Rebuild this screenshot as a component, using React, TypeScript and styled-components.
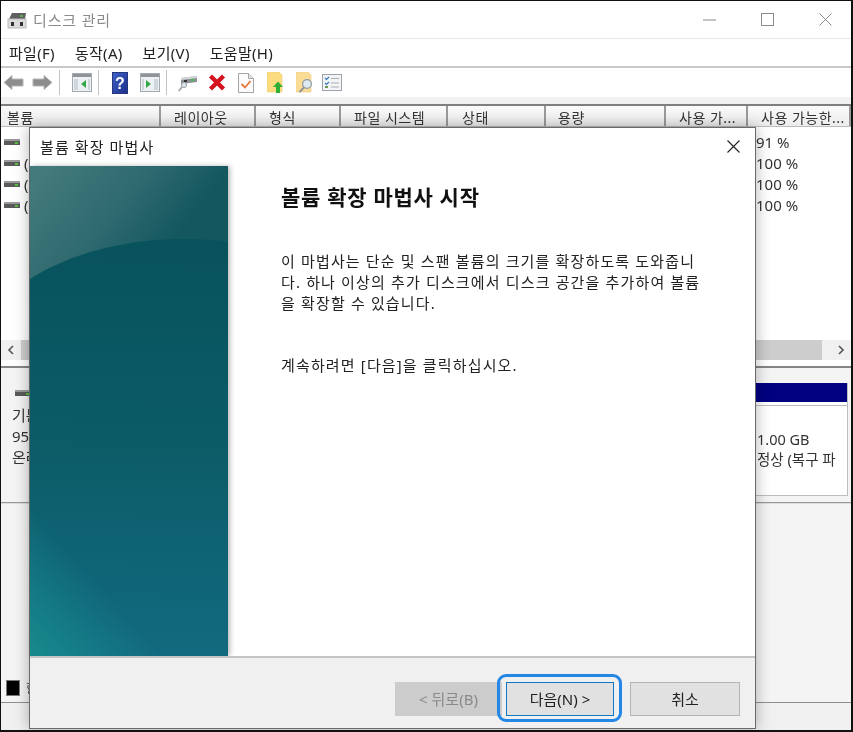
import React from "react";
import styled, { createGlobalStyle } from "styled-components";

const Global = createGlobalStyle`
  html, body { margin: 0; padding: 0; background: #fff; overflow: hidden; }
  body { font-family: "Noto Sans", "Noto Sans CJK KR", sans-serif; color: #222; }
  * { box-sizing: border-box; }
`;

const Frame = styled.div`
  position: relative;
  width: 853px;
  height: 732px;
  border: 1px solid #111;
  border-width: 1px 2px 2px 1px;
  display: flex;
  flex-direction: column;
  overflow: hidden;
  background: #fff;
  filter: blur(0.3px);
`;

const TitleBar = styled.header`
  height: 38px;
  flex: none;
  display: flex;
  align-items: center;
  padding-left: 6px;
  border-bottom: 1px solid #e8e8e8;
`;
const AppTitle = styled.span`
  margin-left: 6px;
  font-size: 15px;
  letter-spacing: 0.85px;
  color: #8a8a8a;
  flex: 1;
`;
const WinControl = styled.span<{ $mr?: number }>`
  width: 58px;
  height: 26px;
  display: flex;
  align-items: center;
  justify-content: center;
  margin-right: ${(p) => p.$mr ?? 0}px;
`;

const MenuBar = styled.nav`
  height: 29px;
  flex: none;
  display: flex;
  align-items: center;
  padding: 0 0 1px 8px;
  gap: 20px;
  font-size: 15px;
  letter-spacing: 0.3px;
  color: #222;
  border-bottom: 2px solid #c9c9c9;
`;

const Toolbar = styled.div`
  height: 29px;
  flex: none;
  display: flex;
  align-items: center;
  padding-left: 2px;
`;
const Tool = styled.span<{ $ml?: number }>`
  display: flex;
  align-items: center;
  margin-left: ${(p) => p.$ml ?? 0}px;
`;
const ToolSep = styled.span`
  width: 1px;
  height: 25px;
  background: #c4c4c4;
  margin: 0 0 0 6px;
`;
const ToolGap = styled.div`
  height: 7px;
  flex: none;
  background: #f1f1f1;
`;

const Columns = "160px 95px 85px 107px 98px 120px 82px 1fr";

const HeaderRow = styled.div`
  height: 23px;
  flex: none;
  display: grid;
  grid-template-columns: ${Columns};
  border-top: 2px solid #7f7f7f;
  background: linear-gradient(#fafafa, #ececec);
  border-bottom: 1px solid #bbb;
`;
const HeaderCell = styled.div<{ $pl: number }>`
  font-size: 14px;
  line-height: 24px;
  letter-spacing: 0.5px;
  color: #333;
  white-space: nowrap;
  overflow: hidden;
  padding-left: ${(p) => p.$pl}px;
  border-right: 2px solid #9a9a9a;
`;

const VolumeList = styled.div`
  height: 213px;
  flex: none;
  padding-top: 4px;
  display: flex;
  flex-direction: column;
`;
const VolumeRow = styled.div`
  height: 21px;
  flex: none;
  display: grid;
  grid-template-columns: ${Columns};
  align-items: center;
  font-size: 15px;
  color: #333;
`;
const NameCell = styled.div`
  display: flex;
  align-items: center;
  gap: 4px;
  padding-left: 3px;
  white-space: nowrap;
`;
const RightCell = styled.div`
  grid-column: 8;
  padding: 0 0 0 8px;
`;

const HScroll = styled.div`
  height: 20px;
  flex: none;
  display: flex;
  align-items: center;
  background: #f0f0f0;
`;
const ScrollArrow = styled.span`
  width: 20px;
  height: 20px;
  display: flex;
  align-items: center;
  justify-content: center;
  flex: none;
`;
const ScrollThumb = styled.span`
  flex: 1;
  height: 20px;
  background: #cdcdcd;
  margin-right: 9px;
`;

const PaneGap = styled.div`
  height: 6px;
  flex: none;
  background: #fff;
`;
const DiskPane = styled.section`
  height: 137px;
  flex: none;
  border-top: 2px solid #858585;
  border-bottom: 1px solid #9a9a9a;
  background: #f4f4f4;
  display: flex;
  justify-content: space-between;
  padding: 15px 3px 6px 0;
`;
const DiskInfo = styled.div`
  padding: 7px 0 0 11px;
  font-size: 15px;
  line-height: 21px;
  color: #333;
`;
const DiskGlyph = styled.div`
  height: 15px;
  padding-left: 3px;
  display: flex;
  align-items: flex-start;
`;
const PartitionBox = styled.div`
  width: 100px;
  background: #fff;
  border-right: 1px solid #bdbdbd;
  border-bottom: 1px solid #bdbdbd;
  display: flex;
  flex-direction: column;
`;
const PartitionBar = styled.div`
  height: 19px;
  background: #000080;
  flex: none;
`;
const PartitionRule = styled.div`
  height: 1px;
  background: #bdbdbd;
  margin-top: 3px;
  flex: none;
`;
const PartitionText = styled.div`
  margin: 23px 0 0 9px;
  font-size: 14.5px;
  line-height: 20px;
  color: #333;
  white-space: nowrap;
`;

const EmptyArea = styled.div`
  flex: 1;
  background: #f4f4f4;
  border-top: 1px solid #dcdcdc;
`;
const Legend = styled.div`
  height: 29px;
  flex: none;
  display: flex;
  align-items: center;
  gap: 6px;
  padding-left: 5px;
  font-size: 12px;
  color: #444;
  background: #f4f4f4;
  border-bottom: 1px solid #8f8f8f;
`;
const LegendSwatch = styled.span`
  width: 14px;
  height: 16px;
  background: #000;
  border: 1px solid #777;
`;
const StatusBar = styled.div`
  height: 27px;
  flex: none;
  background: #f0f0f0;
`;

const Dialog = styled.div`
  position: absolute;
  left: 28px;
  top: 126px;
  width: 727px;
  height: 602px;
  background: #fff;
  border: 1px solid #6b6b6b;
  box-shadow: 0 0 14px rgba(0, 0, 0, 0.3);
  display: flex;
  flex-direction: column;
`;
const DialogTitle = styled.div`
  height: 38px;
  flex: none;
  display: flex;
  align-items: center;
  justify-content: space-between;
  padding: 0 15px 2px 10px;
  font-size: 15px;
  letter-spacing: 1.1px;
  color: #222;
`;
const DialogBody = styled.div`
  flex: 1;
  display: flex;
  min-height: 0;
`;
const SideArt = styled.div`
  width: 198px;
  flex: none;
  box-shadow: 2px 0 5px rgba(0, 0, 0, 0.28);
  line-height: 0;
`;
const WizardContent = styled.div`
  flex: 1;
  padding: 15px 0 0 53px;
`;
const Heading = styled.h1`
  margin: 0;
  font-size: 21px;
  line-height: 32px;
  font-weight: 700;
  letter-spacing: 0.7px;
  color: #111;
`;
const Paragraph = styled.p<{ $mt: number }>`
  margin: ${(p) => p.$mt}px 0 0;
  font-size: 15px;
  line-height: 21px;
  letter-spacing: 1.15px;
  color: #222;
  white-space: nowrap;
`;
const DialogFooter = styled.div`
  height: 72px;
  flex: none;
  background: #f0f0f0;
  border-top: 2px solid #c4c4c4;
  display: flex;
  align-items: flex-start;
  padding: 24px 0 0 365px;
`;
const WizardButton = styled.button<{ $disabled?: boolean; $w: number; $ml?: number; $focus?: boolean }>`
  position: relative;
  width: ${(p) => p.$w}px;
  height: 34px;
  margin-left: ${(p) => p.$ml ?? 0}px;
  padding: 0 0 2px;
  font-family: inherit;
  font-size: 15px;
  color: ${(p) => (p.$disabled ? "#8a8a8a" : "#222")};
  background: ${(p) => (p.$disabled ? "#cccccc" : "#e1e1e1")};
  border: 1px solid ${(p) => (p.$focus ? "#0f78c8" : p.$disabled ? "#cccccc" : "#b4b4b4")};
`;
const FocusRing = styled.span`
  position: absolute;
  left: -10px;
  right: -9px;
  top: -9px;
  bottom: -7px;
  border: 3px solid #2487e6;
  border-radius: 9px;
`;

const DiskBar = () => (
  <svg width="16" height="6" viewBox="0 0 16 6">
    <rect width="16" height="6" fill="#5a5a5a" />
    <rect width="16" height="2" fill="#9a9a9a" />
    <rect x="11" y="3" width="3" height="2" fill="#58c23c" />
  </svg>
);

const AppIcon = () => (
  <svg width="20" height="18" viewBox="0 0 20 18">
    <path d="M2 8 L5 2 H19 L18 8 Z" fill="#5f5f5f" />
    <rect x="13" y="4" width="3" height="2" fill="#58b050" />
    <rect x="1" y="8" width="18" height="9" fill="#dcdcdc" stroke="#bbb" />
    <rect x="4" y="11" width="3" height="4" fill="#333" />
    <rect x="13" y="11" width="3" height="4" fill="#333" />
  </svg>
);

const ArrowIcon = ({ flip }: { flip?: boolean }) => (
  <svg width="21" height="17" viewBox="0 0 21 17" style={flip ? { transform: "scaleX(-1)" } : undefined}>
    <path d="M1 8.5 L9 1.5 V5 H20 V12 H9 V15.5 Z" fill="#8d8d8d" stroke="#b5b5b5" />
  </svg>
);

const PaneIcon = ({ right }: { right?: boolean }) => (
  <svg width="20" height="19" viewBox="0 0 20 19">
    <rect x="0.5" y="0.5" width="19" height="18" fill="#eef1f4" stroke="#a4a9ae" />
    <rect x="1" y="1" width="18" height="3" fill="#8f9499" />
    {right ? (
      <>
        <path d="M6 7 L11 11 L6 15 Z" fill="#35a846" />
        <rect x="14" y="6" width="4" height="11" fill="#cfd6dc" />
        <rect x="2" y="6" width="2" height="11" fill="#cfd6dc" />
      </>
    ) : (
      <>
        <path d="M14 7 L9 11 L14 15 Z" fill="#35a846" />
        <rect x="2" y="6" width="4" height="11" fill="#cfd6dc" />
        <rect x="16" y="6" width="2" height="11" fill="#cfd6dc" />
      </>
    )}
  </svg>
);

const HelpIcon = () => (
  <svg width="16" height="22" viewBox="0 0 16 22">
    <defs>
      <linearGradient id="helpFill" x1="0" y1="0" x2="1" y2="1">
        <stop offset="0" stopColor="#3f62c8" />
        <stop offset="1" stopColor="#1b2f8a" />
      </linearGradient>
    </defs>
    <rect x="0.5" y="0.5" width="15" height="21" fill="url(#helpFill)" stroke="#26367f" />
    <text x="8" y="16.5" textAnchor="middle" fontSize="16" fontWeight="700" fill="#fff" fontFamily="Liberation Sans">?</text>
  </svg>
);

const DiskFindIcon = () => (
  <svg width="20" height="20" viewBox="0 0 20 20">
    <path d="M3 5 L19 3 V9 L3 11 Z" fill="#8c9096" />
    <path d="M3 5 L19 3 V5 L3 7 Z" fill="#d4d8dc" />
    <rect x="13" y="6" width="3" height="2" fill="#3fc04a" />
    <rect x="6" y="7" width="3" height="2" fill="#333" />
    <circle cx="6" cy="12" r="2.6" fill="#dfe8ee" stroke="#9aa0a6" />
    <path d="M4 14 L0.8 18" stroke="#a8a8a8" strokeWidth="2" />
  </svg>
);

const RedX = () => (
  <svg width="18" height="17" viewBox="0 0 18 17">
    <path d="M2.5 2 L15.5 15 M15.5 2 L2.5 15" stroke="#d5121e" strokeWidth="4.4" />
  </svg>
);

const CheckDoc = () => (
  <svg width="16" height="20" viewBox="0 0 16 20">
    <path d="M0.5 0.5 H10.5 L15.5 5.5 V19.5 H0.5 Z" fill="#fbfbfb" stroke="#a5a5a5" />
    <path d="M10.5 0.5 V5.5 H15.5" fill="#e4e4e4" stroke="#a5a5a5" />
    <path d="M3.5 11 L7 14.5 L12.5 8" fill="none" stroke="#e8743a" strokeWidth="1.8" />
  </svg>
);

const FolderUp = () => (
  <svg width="16" height="21" viewBox="0 0 16 21">
    <path d="M0 0 H12 L15 3 V20 H0 Z" fill="#fbdc80" stroke="#f0cd70" strokeWidth="0.6" />
    <path d="M11 9.5 L16 15 H13 V21 H9 V15 H6 Z" fill="#2fae38" />
  </svg>
);

const FolderFind = () => (
  <svg width="18" height="21" viewBox="0 0 18 21">
    <path d="M0 0 H12 L15 3 V20 H0 Z" fill="#fbdc95" stroke="#f0cd80" strokeWidth="0.6" />
    <circle cx="11" cy="12" r="4.4" fill="#dfeaf0" stroke="#8c9aa2" strokeWidth="1.2" />
    <path d="M8 15.5 L3.5 20" stroke="#8f9498" strokeWidth="2" />
  </svg>
);

const ListIcon = () => (
  <svg width="20" height="17" viewBox="0 0 20 17">
    <rect x="0.5" y="0.5" width="19" height="16" fill="#f2f4f6" stroke="#9ea4aa" />
    <path d="M3 4 L4.5 5.5 L7 3 M3 9 L4.5 10.5 L7 8" fill="none" stroke="#3a78c8" strokeWidth="1.2" />
    <rect x="3" y="12" width="3" height="2" fill="#6a9a50" />
    <path d="M9 4.5 H17 M9 9 H17 M9 13 H17" stroke="#a8adb2" />
  </svg>
);

const SideArtwork = () => (
  <svg width="198" height="491" viewBox="0 0 198 491">
    <defs>
      <linearGradient id="artLow" gradientUnits="userSpaceOnUse" x1="120" y1="70" x2="110" y2="491">
        <stop offset="0" stopColor="#08525c" />
        <stop offset="0.5" stopColor="#0b5c67" />
        <stop offset="1" stopColor="#126a80" />
      </linearGradient>
      <linearGradient id="artCorner" gradientUnits="userSpaceOnUse" x1="0" y1="491" x2="75" y2="425">
        <stop offset="0" stopColor="#18908f" stopOpacity="0.85" />
        <stop offset="1" stopColor="#18908f" stopOpacity="0" />
      </linearGradient>
      <linearGradient id="artHigh" gradientUnits="userSpaceOnUse" x1="20" y1="0" x2="130" y2="90">
        <stop offset="0" stopColor="#437a7b" />
        <stop offset="0.55" stopColor="#2f6a70" />
        <stop offset="1" stopColor="#14575f" />
      </linearGradient>
    </defs>
    <rect width="198" height="491" fill="url(#artLow)" />
    <rect width="198" height="491" fill="url(#artCorner)" />
    <path d="M0 113 C45 84 105 73 150 73 C172 73 190 74 198 76 V0 H0 Z" fill="url(#artHigh)" />
  </svg>
);

const columns = [
  { label: "볼륨", pl: 6 },
  { label: "레이아웃", pl: 13 },
  { label: "형식", pl: 13 },
  { label: "파일 시스템", pl: 13 },
  { label: "상태", pl: 14 },
  { label: "용량", pl: 12 },
  { label: "사용 가...", pl: 13 },
  { label: "사용 가능한...", pl: 13 },
];

const rows = [
  { id: 1, name: "", free: "91 %" },
  { id: 2, name: "(", free: "100 %" },
  { id: 3, name: "(", free: "100 %" },
  { id: 4, name: "(", free: "100 %" },
];

export default function App() {
  return (
    <>
      <Global />
      <Frame>
        <TitleBar>
          <AppIcon />
          <AppTitle>디스크 관리</AppTitle>
          <WinControl>
            <svg width="13" height="2"><path d="M0 1H13" stroke="#8a8a8a" /></svg>
          </WinControl>
          <WinControl>
            <svg width="13" height="13"><rect x="0.5" y="0.5" width="12" height="12" fill="none" stroke="#8a8a8a" /></svg>
          </WinControl>
          <WinControl $mr={-3}>
            <svg width="13" height="13"><path d="M0.5 0.5L12.5 12.5M12.5 0.5L0.5 12.5" stroke="#8a8a8a" /></svg>
          </WinControl>
        </TitleBar>
        <MenuBar>
          <span>파일(F)</span>
          <span>동작(A)</span>
          <span>보기(V)</span>
          <span>도움말(H)</span>
        </MenuBar>
        <Toolbar>
          <Tool><ArrowIcon /></Tool>
          <Tool $ml={8}><ArrowIcon flip /></Tool>
          <ToolSep />
          <Tool $ml={12}><PaneIcon /></Tool>
          <ToolSep />
          <Tool $ml={13}><HelpIcon /></Tool>
          <Tool $ml={12}><PaneIcon right /></Tool>
          <ToolSep />
          <Tool $ml={11}><DiskFindIcon /></Tool>
          <Tool $ml={10}><RedX /></Tool>
          <Tool $ml={12}><CheckDoc /></Tool>
          <Tool $ml={13}><FolderUp /></Tool>
          <Tool $ml={13}><FolderFind /></Tool>
          <Tool $ml={8}><ListIcon /></Tool>
        </Toolbar>
        <ToolGap />
        <HeaderRow>
          {columns.map((c) => (
            <HeaderCell key={c.label} $pl={c.pl}>{c.label}</HeaderCell>
          ))}
        </HeaderRow>
        <VolumeList>
          {rows.map((r) => (
            <VolumeRow key={r.id}>
              <NameCell><DiskBar />{r.name}</NameCell>
              <RightCell>{r.free}</RightCell>
            </VolumeRow>
          ))}
        </VolumeList>
        <HScroll>
          <ScrollArrow>
            <svg width="8" height="10"><path d="M6 1L2 5L6 9" fill="none" stroke="#555" strokeWidth="1.6" /></svg>
          </ScrollArrow>
          <ScrollThumb />
          <ScrollArrow>
            <svg width="8" height="10"><path d="M2 1L6 5L2 9" fill="none" stroke="#555" strokeWidth="1.6" /></svg>
          </ScrollArrow>
        </HScroll>
        <PaneGap />
        <DiskPane>
          <DiskInfo>
            <DiskGlyph><DiskBar /></DiskGlyph>
            <div>기본</div>
            <div>953.86 GB</div>
            <div>온라인</div>
          </DiskInfo>
          <PartitionBox>
            <PartitionBar />
            <PartitionRule />
            <PartitionText>
              1.00 GB
              <br />
              정상 (복구 파
            </PartitionText>
          </PartitionBox>
        </DiskPane>
        <EmptyArea />
        <Legend>
          <LegendSwatch />
          <span>할당되지 않음</span>
        </Legend>
        <StatusBar />
        <Dialog>
          <DialogTitle>
            <span>볼륨 확장 마법사</span>
            <svg width="13" height="13"><path d="M0.5 0.5L12.5 12.5M12.5 0.5L0.5 12.5" stroke="#222" strokeWidth="1.1" /></svg>
          </DialogTitle>
          <DialogBody>
            <SideArt><SideArtwork /></SideArt>
            <WizardContent>
              <Heading>볼륨 확장 마법사 시작</Heading>
              <Paragraph $mt={38}>
                이 마법사는 단순 및 스팬 볼륨의 크기를 확장하도록 도와줍니
                <br />
                다. 하나 이상의 추가 디스크에서 디스크 공간을 추가하여 볼륨
                <br />
                을 확장할 수 있습니다.
              </Paragraph>
              <Paragraph $mt={41}>계속하려면 [다음]을 클릭하십시오.</Paragraph>
            </WizardContent>
          </DialogBody>
          <DialogFooter>
            <WizardButton $w={107} $disabled>{"< 뒤로(B)"}</WizardButton>
            <WizardButton $w={108} $ml={4} $focus>
              다음(N) {">"}
              <FocusRing />
            </WizardButton>
            <WizardButton $w={110} $ml={16}>취소</WizardButton>
          </DialogFooter>
        </Dialog>
      </Frame>
    </>
  );
}
